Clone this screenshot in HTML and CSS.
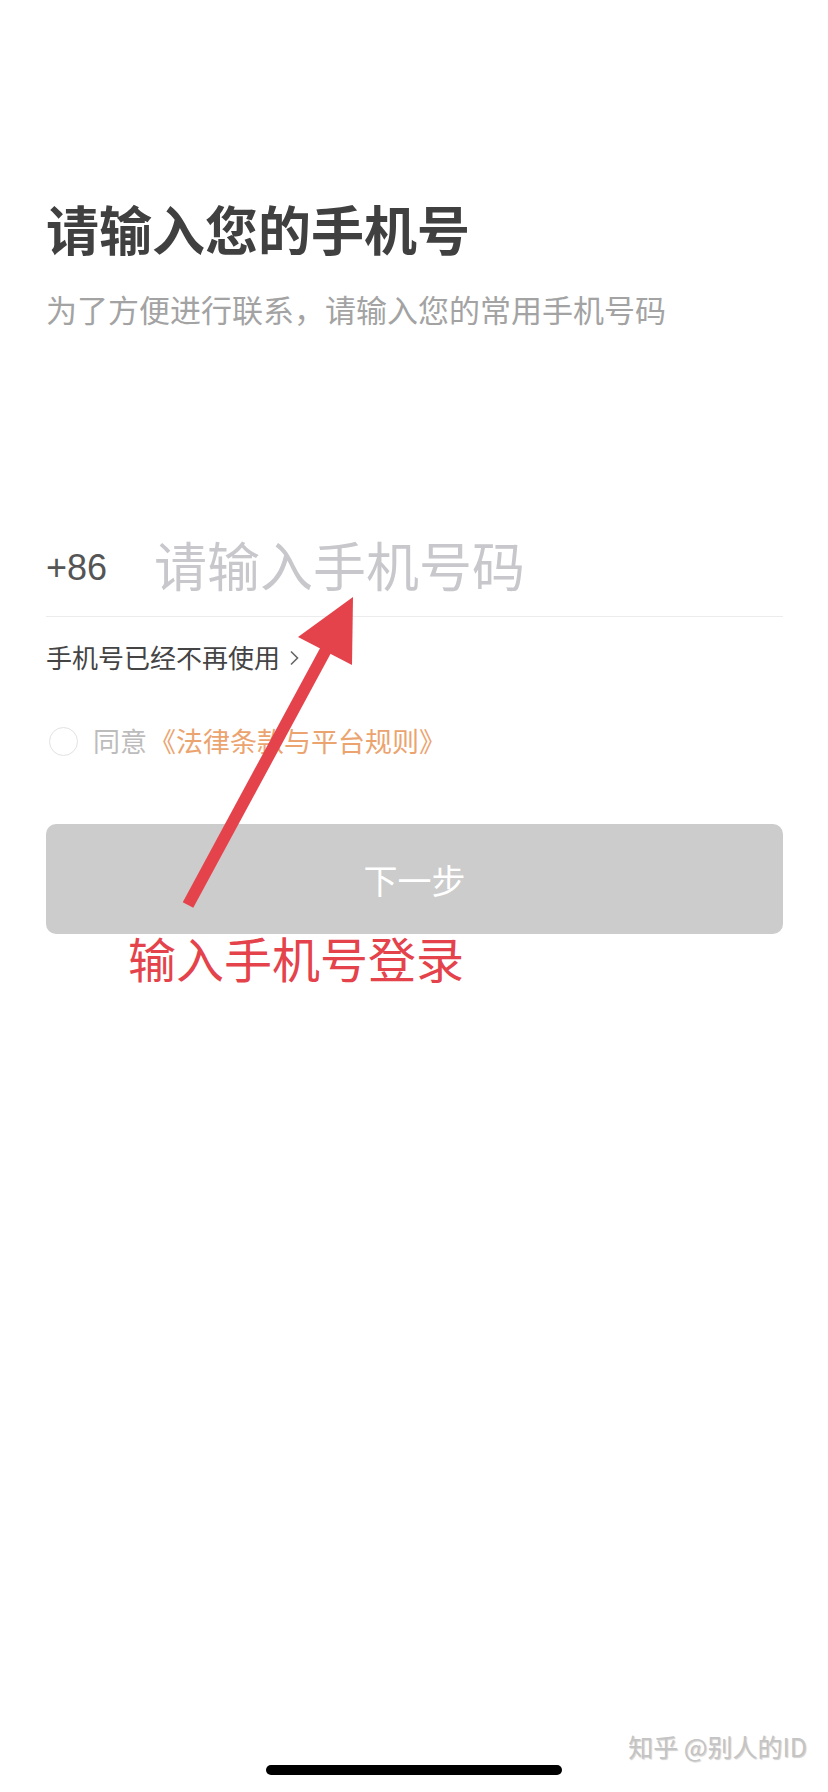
FILE: index.html
```html
<!DOCTYPE html>
<html>
<head>
    <meta charset="utf-8">
    <title>请输入您的手机号</title>
    <link rel="stylesheet" href="styles.css">
</head>
<body>
<div class="screen">
    <div class="content">
        <h1 class="title">请输入您的手机号</h1>
        <p class="subtitle">为了方便进行联系，请输入您的常用手机号码</p>

        <div class="phone-row">
            <span class="area-code">+86</span>
            <span class="placeholder">请输入手机号码</span>
        </div>

        <div class="no-longer">
            <span>手机号已经不再使用</span>
            <svg class="chevron" width="10" height="18" viewBox="0 0 10 18">
                <path d="M2 2.5 L8.5 9 L2 15.5" fill="none" stroke="#666" stroke-width="1.6"/>
            </svg>
        </div>

        <div class="agree">
            <span class="radio"></span>
            <span class="agree-text">同意</span>
            <span class="agree-link">《法律条款与平台规则》</span>
        </div>

        <div class="next-btn">下一步</div>

        <div class="annotation">输入手机号登录</div>
    </div>

    <div class="home-bar"></div>

    <!-- red arrow drawn on top of the screenshot -->
    <svg class="arrow" width="828" height="1792" viewBox="0 0 828 1792">
        <line x1="188" y1="905" x2="328" y2="646" stroke="#e5434b" stroke-width="12"/>
        <polygon points="353,597 298,637 352,665" fill="#e5434b"/>
    </svg>

    <div class="watermark">知乎 @别人的ID</div>
</div>
</body>
</html>
```

FILE: styles.css
```css
html, body {
    margin: 0;
    padding: 0;
    background: #fff;
}
body {
    font-family: "Noto Sans CJK SC", "Noto Sans", sans-serif;
}
.screen {
    position: relative;
    width: 828px;
    min-height: 1792px;
    display: flex;
    flex-direction: column;
}
.content {
    padding: 202px 45px 0 46px;
}
.title {
    margin: 0;
    font-size: 53px;
    line-height: 52px;
    font-weight: 700;
    color: #404040;
}
.subtitle {
    margin: 40px 0 0;
    font-size: 31px;
    line-height: 30px;
    color: #a3a3a3;
}
.phone-row {
    margin-top: 196px;
    height: 96px;
    display: flex;
    align-items: center;
    border-bottom: 1px solid #ececec;
}
.area-code {
    width: 108px;
    font-family: "Liberation Sans", Arial, sans-serif;
    font-size: 36px;
    color: #555;
}
.placeholder {
    font-size: 53px;
    line-height: 52px;
    color: #c8c8cc;
    margin-top: -8px;
}
.no-longer {
    margin-top: 27px;
    display: flex;
    align-items: center;
    gap: 9px;
    font-size: 26px;
    line-height: 26px;
    color: #444;
}
.chevron {
    margin-top: 2px;
}
.agree {
    margin-top: 56px;
    display: flex;
    align-items: center;
    height: 30px;
    font-size: 27px;
    line-height: 30px;
}
.radio {
    width: 27px;
    height: 27px;
    margin-left: 3px;
    border: 1.5px solid #e2e2e2;
    border-radius: 50%;
}
.agree-text {
    margin-left: 15px;
    color: #bcbcbc;
}
.agree-link {
    margin-left: 2px;
    color: #eba470;
}
.next-btn {
    margin-top: 68px;
    height: 110px;
    border-radius: 10px;
    background: #cccccc;
    color: #fff;
    font-size: 34px;
    display: flex;
    align-items: center;
    justify-content: center;
}
.annotation {
    padding-left: 82px;
    font-size: 48px;
    line-height: 46px;
    color: #e5434b;
}
.home-bar {
    margin: auto auto 17px;
    width: 296px;
    height: 10px;
    border-radius: 5px;
    background: #000;
}
.arrow {
    position: absolute;
    left: 0;
    top: 0;
    pointer-events: none;
}
.watermark {
    position: absolute;
    right: 21px;
    bottom: 28px;
    font-size: 25px;
    color: #c4c4c4;
    text-shadow: 1px 1px 1px rgba(0, 0, 0, 0.18);
}
```
